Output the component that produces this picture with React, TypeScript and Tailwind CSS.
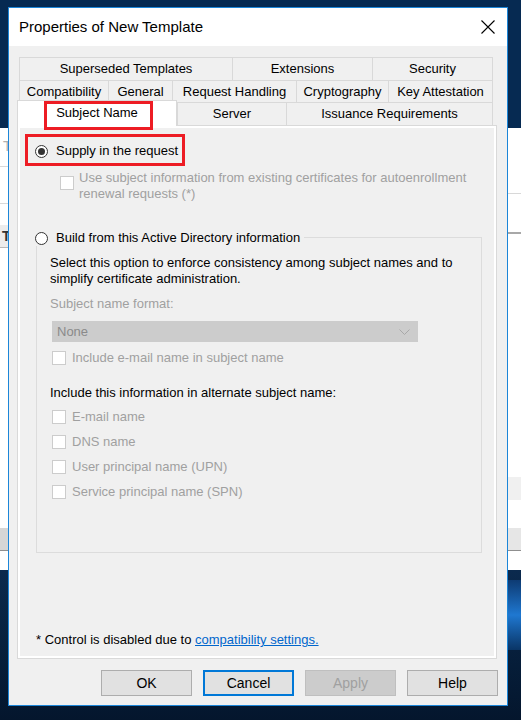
import React from "react";

// Tab rows of the property sheet, back row first
const tabRows = [
  [
    { label: "Superseded Templates", w: "w-[213px]" },
    { label: "Extensions", w: "w-[140px]" },
    { label: "Security", w: "w-[121px]" },
  ],
  [
    { label: "Compatibility", w: "w-[89px]" },
    { label: "General", w: "w-[64px]" },
    { label: "Request Handling", w: "w-[124px]" },
    { label: "Cryptography", w: "w-[92px]" },
    { label: "Key Attestation", w: "w-[105px]" },
  ],
];

const altNames = [
  "E-mail name",
  "DNS name",
  "User principal name (UPN)",
  "Service principal name (SPN)",
];

function Radio({ checked }: { checked?: boolean }) {
  return (
    <span className="flex h-[13px] w-[13px] shrink-0 items-center justify-center rounded-full border border-[#333333] bg-white">
      {checked && <span className="h-[7px] w-[7px] rounded-full bg-[#333333]" />}
    </span>
  );
}

function Checkbox() {
  return <span className="block h-[14px] w-[14px] shrink-0 border border-[#cccccc] bg-white" />;
}

function Button({ label, variant }: { label: string; variant?: "default" | "disabled" }) {
  const styles =
    variant === "default"
      ? "border-2 border-[#0078d7] bg-[#e1e1e1] text-black"
      : variant === "disabled"
      ? "border border-[#bfbfbf] bg-[#cccccc] text-[#a0a0a0]"
      : "border border-[#adadad] bg-[#e1e1e1] text-black";
  return (
    <div className={`flex h-[26px] w-[91px] items-center justify-center text-[14px] ${styles}`}>
      {label}
    </div>
  );
}

export default function App() {
  return (
    <div className="relative h-[720px] w-[521px] overflow-hidden bg-[#062a52] font-['Liberation_Sans',Arial,sans-serif] text-[13px] text-black">
      {/* window behind the dialog */}
      <div className="absolute left-0 top-[128px] flex h-[442px] w-[521px] bg-white">
        <div className="flex w-[260px] flex-col">
          <div className="h-[38px] pl-[3px] pt-[8px] text-[14px] text-[#b0b0b0]">T</div>
          <div className="h-[1px] bg-[#d8d8d8]" />
          <div className="h-[36px]" />
          <div className="h-[1px] bg-[#d8d8d8]" />
          <div className="h-[21px]" />
          <div className="flex h-[22px] items-center bg-[#ececec] pl-[2px] text-[14px] font-bold text-[#333]">T</div>
          <div className="h-[1px] bg-[#b8b8b8]" />
          <div className="h-[280px]" />
          <div className="h-[22px] bg-[#d6d6d6]" />
          <div className="h-[1px] bg-[#8f8f8f]" />
          <div className="flex-1" />
        </div>
        <div className="flex flex-1 flex-col">
          <div className="h-[65px]" />
          <div className="h-[1px] bg-[#d8d8d8]" />
          <div className="h-[38px]" />
          <div className="h-[2px] bg-[#a8a8a8]" />
          <div className="h-[243px]" />
          <div className="h-[23px] bg-[#f0f0f0]" />
          <div className="h-[28px]" />
          <div className="h-[22px] bg-[#e6e6e6]" />
          <div className="h-[1px] bg-[#8f8f8f]" />
          <div className="flex-1" />
        </div>
      </div>

      {/* wallpaper below */}
      <div className="absolute bottom-0 left-0 h-[150px] w-[521px] bg-gradient-to-b from-[#0b2a4e] to-[#04162d]" />
      <div className="absolute bottom-[70px] right-0 h-[70px] w-[14px] bg-gradient-to-b from-[#0d3b73] via-[#1f78d1] to-[#0a3566]" />

      {/* dialog */}
      <div className="absolute left-[8px] top-[7px] flex h-[699px] w-[500px] flex-col border border-[#1c86d8] bg-[#f0f0f0]">
        {/* title bar */}
        <div className="flex h-[38px] shrink-0 items-center justify-between bg-white pl-[10px] pr-[12px]">
          <span className="text-[15px]">Properties of New Template</span>
          <svg width="14" height="14" viewBox="0 0 14 14">
            <path d="M0.5 0.5 L13.5 13.5 M13.5 0.5 L0.5 13.5" stroke="#000" strokeWidth="1.1" fill="none" />
          </svg>
        </div>

        {/* tabs */}
        <div className="mt-[11px] flex flex-col">
          {tabRows.map((row, i) => (
            <div key={i} className={`ml-[10px] flex ${i === 0 ? "h-[23px]" : "h-[22px]"}`}>
              {row.map((t, j) => (
                <div
                  key={t.label}
                  className={`flex items-center justify-center border-l border-t border-[#d9d9d9] bg-[#f0f0f0] ${t.w} ${
                    j === row.length - 1 ? "border-r" : ""
                  }`}
                >
                  {t.label}
                </div>
              ))}
            </div>
          ))}
          <div className="ml-[8px] flex h-[23px] items-start">
            <div className="relative z-10 -mb-[1px] -mt-[2px] flex h-[26px] w-[160px] items-center justify-center border border-b-0 border-[#d9d9d9] bg-white pb-[2px]">
              Subject Name
              <div className="absolute left-[26px] top-0 h-[29px] w-[109px] border-[3px] border-[#ed1c24]" />
            </div>
            <div className="flex h-[23px] w-[109px] items-center justify-center border-l border-t border-[#d9d9d9]">
              Server
            </div>
            <div className="flex h-[23px] w-[207px] items-center justify-center border-l border-r border-t border-[#d9d9d9]">
              Issuance Requirements
            </div>
          </div>
        </div>

        {/* tab page */}
        <div className="ml-[8px] h-[534px] w-[480px] border border-[#d9d9d9] bg-white p-[2px]">
          <div className="relative flex h-full flex-col bg-[#f0f0f0] pl-[15px] pt-[15px]">
            <div className="absolute left-[5px] top-[6px] h-[32px] w-[160px] border-[3px] border-[#ed1c24]" />

            <div className="flex h-[16px] items-center gap-[8px]">
              <Radio checked />
              <span>Supply in the request</span>
            </div>

            <div className="ml-[25px] mt-[11px] flex items-start gap-[5px] text-[#a0a0a0]">
              <div className="mt-[6px]">
                <Checkbox />
              </div>
              <span className="whitespace-nowrap leading-[16px]">
                Use subject information from existing certificates for autoenrollment
                <br />
                renewal requests (*)
              </span>
            </div>

            {/* group box */}
            <div className="relative ml-[1px] mt-[35px] h-[316px] w-[446px] border border-[#dcdcdc] pl-[13px] pt-[17px]">
              <div className="absolute -left-[2px] -top-[8px] flex h-[16px] items-center gap-[8px] bg-[#f0f0f0] pr-[4px]">
                <Radio />
                <span>Build from this Active Directory information</span>
              </div>

              <p className="whitespace-nowrap leading-[16px]">
                Select this option to enforce consistency among subject names and to
                <br />
                simplify certificate administration.
              </p>

              <p className="mt-[9px] leading-[16px] text-[#a0a0a0]">Subject name format:</p>

              <div className="ml-[2px] mt-[9px] flex h-[21px] w-[366px] items-center justify-between bg-[#cccccc] pl-[5px] pr-[8px] text-[#8a8a8a]">
                <span>None</span>
                <svg width="11" height="6" viewBox="0 0 11 6">
                  <path d="M0.5 0.5 L5.5 5.5 L10.5 0.5" stroke="#a8a8a8" fill="none" />
                </svg>
              </div>

              <div className="ml-[2px] mt-[8px] flex h-[16px] items-center gap-[6px] text-[#a0a0a0]">
                <Checkbox />
                <span>Include e-mail name in subject name</span>
              </div>

              <p className="mt-[19px] leading-[16px]">Include this information in alternate subject name:</p>

              <div className="ml-[2px] mt-[8px] flex flex-col gap-[9px] text-[#a0a0a0]">
                {altNames.map((n) => (
                  <div key={n} className="flex h-[16px] items-center gap-[6px]">
                    <Checkbox />
                    <span>{n}</span>
                  </div>
                ))}
              </div>
            </div>

            <p className="ml-[1px] mt-[79px] leading-[16px]">
              * Control is disabled due to{" "}
              <span className="text-[#0066cc] underline">compatibility settings.</span>
            </p>
          </div>
        </div>

        {/* buttons */}
        <div className="mt-[11px] flex justify-end gap-[11px] pr-[9px]">
          <Button label="OK" />
          <Button label="Cancel" variant="default" />
          <Button label="Apply" variant="disabled" />
          <Button label="Help" />
        </div>
      </div>
    </div>
  );
}
